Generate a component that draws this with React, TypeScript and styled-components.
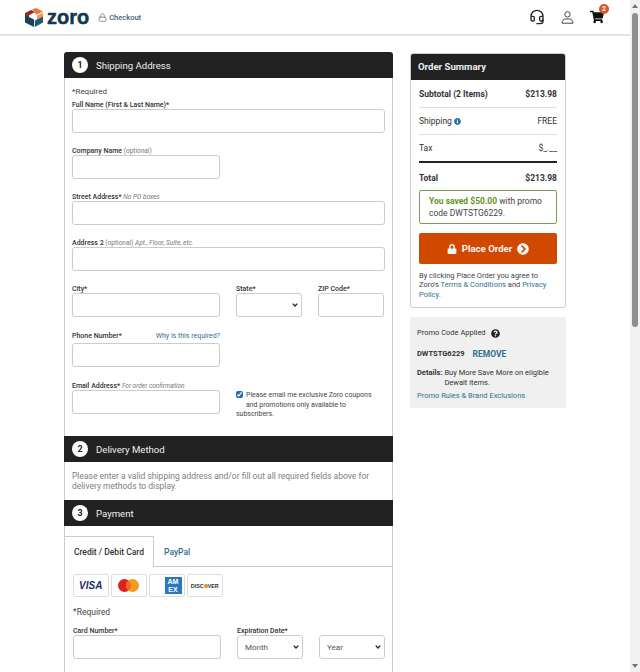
import React from 'react';
import styled, { createGlobalStyle } from 'styled-components';
import { FaChevronCircleRight, FaInfoCircle, FaLock, FaQuestionCircle, FaShoppingCart } from 'react-icons/fa';
import { LuHeadset, LuLock } from 'react-icons/lu';

const GlobalStyle = createGlobalStyle`
  body {
    margin: 0;
    background: #fff;
    color: #333;
    font-family: Roboto, "Liberation Sans", sans-serif;
  }
  * {
    box-sizing: border-box;
  }
`;

const Shell = styled.div`
  width: 630px;
`;

const ScrollTrack = styled.div`
  position: fixed;
  top: 0;
  right: 0;
  bottom: 0;
  width: 10px;
  background: #f1f1f1;
  display: flex;
  flex-direction: column;
  align-items: center;
  padding: 4px 0;
`;

const ScrollArrow = styled.span<{ $down?: boolean }>`
  width: 0;
  height: 0;
  flex: none;
  border-left: 3px solid transparent;
  border-right: 3px solid transparent;
  border-bottom: ${(p) => (p.$down ? 'none' : '4px solid #777')};
  border-top: ${(p) => (p.$down ? '4px solid #777' : 'none')};
  margin-top: ${(p) => (p.$down ? 'auto' : '0')};
`;

const ScrollThumb = styled.span`
  width: 6px;
  height: 314px;
  margin-top: 5px;
  flex: none;
  border-radius: 3px;
  background: #8f8f8f;
`;

const TopBar = styled.header`
  height: 36px;
  border-bottom: 2px solid #e2e2e2;
  display: flex;
  align-items: center;
  padding: 0 26px 0 25px;
`;

const Brand = styled.div`
  display: flex;
  align-items: center;
`;

const Wordmark = styled.span`
  font-family: "Liberation Sans", sans-serif;
  font-size: 20px;
  font-weight: 700;
  line-height: 20px;
  color: #16384f;
  -webkit-text-stroke: 0.5px #16384f;
  margin-left: 4px;
`;

const CheckoutTag = styled.span`
  display: flex;
  align-items: center;
  gap: 2px;
  margin-left: 9px;
  font-size: 7.5px;
  font-weight: 500;
  color: #3b6478;
  svg {
    color: #777;
  }
`;

const TopIcons = styled.div`
  margin-left: auto;
  display: flex;
  align-items: center;
  gap: 16px;
`;

const CartWrap = styled.span`
  position: relative;
  display: flex;
`;

const CartBadge = styled.span`
  position: absolute;
  top: -6px;
  right: -5px;
  width: 10px;
  height: 10px;
  border-radius: 50%;
  background: #d9541e;
  color: #fff;
  font-size: 7px;
  font-weight: 700;
  line-height: 10px;
  text-align: center;
`;

const Page = styled.main`
  width: 502px;
  min-height: 1346px;
  margin: 16px auto 0;
  display: grid;
  grid-template-columns: 329px 156px;
  column-gap: 17px;
`;

const Checkout = styled.div`
  display: flex;
  flex-direction: column;
`;

const SectionBar = styled.div`
  height: 26px;
  flex: none;
  background: #222;
  border-radius: ${(p: { $rounded?: boolean }) => (p.$rounded ? '3px 3px 0 0' : '0')};
  display: flex;
  align-items: center;
  padding-left: 8px;
  gap: 8px;
  color: #eee;
  font-size: 9.6px;
`;

const StepDot = styled.span`
  width: 16px;
  height: 16px;
  border-radius: 50%;
  background: #fff;
  color: #222;
  font-size: 9px;
  font-weight: 700;
  line-height: 16px;
  text-align: center;
`;

const SectionBody = styled.section`
  border: solid #ccc;
  border-width: 0 1px;
  padding: ${(p: { $grow?: boolean }) => (p.$grow ? '10px 0 0' : '8px 7px')};
  flex: ${(p: { $grow?: boolean }) => (p.$grow ? '1' : 'none')};
`;

const Required = styled.div`
  font-size: 8px;
  line-height: 10px;
  color: #444;
  margin: 1px 0 2px;
`;

const Field = styled.div`
  margin-bottom: ${(p: { $after?: number }) => p.$after ?? 12}px;
`;

const Label = styled.label`
  display: flex;
  justify-content: space-between;
  height: 10px;
  padding-top: 1px;
  font-size: 7px;
  font-weight: 500;
  line-height: 10px;
  color: #333;
  margin-bottom: ${(p: { $tall?: boolean }) => (p.$tall ? '3px' : '0')};
`;

const Hint = styled.em`
  font-weight: 400;
  color: #777;
  font-size: 6.5px;
`;

const Optional = styled.span`
  font-weight: 400;
  color: #777;
  font-size: 6.5px;
`;

const LinkText = styled.a`
  color: #31708f;
  font-weight: 400;
`;

const TextInput = styled.input`
  display: block;
  width: 100%;
  height: 24px;
  border: 1px solid #ccc;
  border-radius: 3px;
  background: #fff;
`;

const Picker = styled.select`
  display: block;
  width: 100%;
  height: 24px;
  border: 1px solid #ccc;
  border-radius: 3px;
  appearance: none;
  background: #fff url("data:image/svg+xml,%3Csvg xmlns='http://www.w3.org/2000/svg' width='6' height='4' viewBox='0 0 6 4'%3E%3Cpath d='M.7.6L3 3l2.3-2.4' fill='none' stroke='%23222' stroke-width='1.3'/%3E%3C/svg%3E") no-repeat right 3.5px center;
  padding-left: 7px;
  color: #555;
  font-family: Roboto, sans-serif;
  font-size: 8px;
`;

const ShortColumn = styled.div`
  width: 148px;
`;

const TripleRow = styled.div`
  display: grid;
  grid-template-columns: 148px 66px 66px;
  column-gap: 16px;
`;

const EmailRow = styled.div`
  display: grid;
  grid-template-columns: 148px 1fr;
  column-gap: 16px;
`;

const OptIn = styled.label`
  display: block;
  height: 34px;
  padding-top: 11px;
  font-size: 6.95px;
  line-height: 9.5px;
  color: #444;
  input {
    width: 7px;
    height: 7px;
    margin: 0 3px 0 0;
    accent-color: #1a6fc0;
    vertical-align: -1px;
  }
`;

const Indent = styled.span`
  display: inline-block;
  width: 10px;
`;

const Notice = styled.p`
  margin: 1px 0;
  font-size: 8.5px;
  line-height: 10px;
  color: #808080;
`;

const TabList = styled.div`
  display: flex;
  height: 31px;
  border-bottom: 1px solid #ccc;
`;

const Tab = styled.div<{ $active?: boolean }>`
  width: ${(p) => (p.$active ? '89px' : 'auto')};
  height: ${(p) => (p.$active ? '31px' : '30px')};
  margin-left: ${(p) => (p.$active ? '0' : '10px')};
  background: #fff;
  border-right: ${(p) => (p.$active ? '1px solid #ccc' : 'none')};
  border-top: ${(p) => (p.$active ? '1px solid #ccc' : 'none')};
  font-size: 8.5px;
  font-weight: 500;
  line-height: ${(p) => (p.$active ? '31px' : '32px')};
  text-align: center;
  color: ${(p) => (p.$active ? '#333' : '#31708f')};
`;

const PayPane = styled.div`
  padding: 7px 8px;
`;

const CardRow = styled.div`
  display: flex;
  gap: 2.5px;
  margin-bottom: 10px;
`;

const CardTile = styled.div`
  width: 35.5px;
  height: 23px;
  border: 1px solid #ddd;
  border-radius: 2px;
  background: #fff;
  display: flex;
  align-items: center;
  justify-content: center;
`;

const VisaMark = styled.span`
  font-family: "Liberation Sans", sans-serif;
  font-size: 10px;
  font-weight: 700;
  font-style: italic;
  color: #1f2f6b;
`;

const AmexMark = styled.span`
  width: 17px;
  height: 17px;
  margin-left: auto;
  margin-right: 2px;
  background: #2a78c2;
  color: #fff;
  font-family: "Liberation Sans", sans-serif;
  font-size: 7px;
  font-weight: 700;
  line-height: 8px;
  text-align: center;
  padding-top: 1px;
`;

const DiscoverMark = styled.span`
  font-family: "Liberation Sans", sans-serif;
  font-size: 5.4px;
  font-weight: 700;
  color: #333;
  display: flex;
  align-items: center;
`;

const DiscoverDot = styled.span`
  width: 4px;
  height: 4px;
  border-radius: 50%;
  background: #ec8a1d;
`;

const PayRequired = styled.div`
  font-size: 8.5px;
  line-height: 10px;
  color: #444;
  margin-bottom: 8px;
`;

const Aside = styled.aside`
  align-self: start;
  margin-top: 1px;
  display: flex;
  flex-direction: column;
  gap: 9px;
`;

const SummaryCard = styled.div`
  border: 1px solid #ccc;
  border-radius: 3px;
  overflow: hidden;
`;

const SummaryTitle = styled.h2`
  margin: 0;
  height: 26px;
  background: #222;
  color: #eee;
  font-size: 9.6px;
  font-weight: 700;
  line-height: 26px;
  padding-left: 7px;
`;

const SummaryBody = styled.div`
  padding: 1px 8px 8px;
`;

const SummaryRow = styled.div<{ $strong?: boolean; $line?: 'thin' | 'thick' | 'none' }>`
  height: ${(p) => (p.$line === 'thin' || !p.$line ? '27px' : '28px')};
  padding-top: ${(p) => (p.$line === 'none' ? '1px' : '0')};
  display: flex;
  justify-content: space-between;
  align-items: center;
  font-size: 8.5px;
  font-weight: ${(p) => (p.$strong ? 700 : 400)};
  color: #333;
  border-bottom: ${(p) =>
    p.$line === 'thick' ? '2px solid #222' : p.$line === 'none' ? 'none' : '1px solid #ddd'};
`;

const ShipLabel = styled.span`
  display: flex;
  align-items: center;
  gap: 2px;
  svg {
    color: #2a6f9e;
  }
`;

const SavedBox = styled.div`
  border: 1px solid #7d9a5b;
  border-radius: 2px;
  padding: 4px 9px;
  font-size: 8.5px;
  line-height: 12px;
  color: #444;
  margin-top: -1px;
  b {
    color: #5f9426;
  }
`;

const PlaceOrder = styled.button`
  width: 100%;
  height: 31px;
  margin-top: 9px;
  border: none;
  border-radius: 2px;
  background: #d14900;
  color: #f4f4f4;
  font-family: Roboto, sans-serif;
  font-size: 9.6px;
  font-weight: 700;
  display: flex;
  align-items: center;
  justify-content: center;
  gap: 5px;
`;

const Terms = styled.p`
  margin: 7px 0 0;
  font-size: 7.5px;
  line-height: 9.4px;
  color: #444;
`;

const PromoCard = styled.div`
  background: #f0f0f0;
  padding: 11px 7px 7px;
  font-size: 7.5px;
  color: #333;
`;

const PromoHead = styled.div`
  display: flex;
  align-items: center;
  gap: 5px;
  line-height: 10px;
  svg {
    color: #222;
  }
`;

const PromoCode = styled.div`
  display: flex;
  align-items: center;
  gap: 8px;
  margin-top: 11px;
  line-height: 10px;
  font-weight: 700;
`;

const RemoveLink = styled.a`
  color: #31708f;
  font-size: 8.5px;
`;

const PromoDetails = styled.div`
  display: flex;
  gap: 2px;
  margin-top: 9px;
  line-height: 9.4px;
  b {
    flex: none;
  }
`;

const PromoRules = styled.a`
  display: block;
  margin-top: 4px;
  line-height: 10px;
  color: #31708f;
`;

const Step = ({ n, title, rounded }: { n: number; title: string; rounded?: boolean }) => (
  <SectionBar $rounded={rounded}>
    <StepDot>{n}</StepDot>
    {title}
  </SectionBar>
);

const LogoCube = () => (
  <svg width="18" height="19" viewBox="0 0 18 19">
    <path d="M0 5l6-3 4 2-6 3.2V12L0 10z" fill="#8f2f1e" />
    <path d="M7 1.5L11 0l7 3.5-6.5 3.2z" fill="#e8793a" />
    <path d="M12 7.5L18 4.5v5l-6 3z" fill="#f09a55" />
    <path d="M0 7l9 4.6V19L0 14.5z" fill="#17445c" />
    <path d="M9.8 12.5L18 8.8v5.6L9.8 19z" fill="#1f5a72" />
  </svg>
);

const UserGlyph = () => (
  <svg width="13" height="13" viewBox="0 0 13 13" fill="none" stroke="#333" strokeWidth="0.9">
    <circle cx="6.5" cy="3.4" r="2.7" />
    <path d="M1 12.2c0-2.6 1.6-4 3.2-4.2h4.6c1.6.2 3.2 1.6 3.2 4.2z" />
  </svg>
);

const MasterMark = () => (
  <svg width="21" height="13" viewBox="0 0 21 13">
    <circle cx="6.5" cy="6.5" r="6.5" fill="#e0201c" />
    <circle cx="14.5" cy="6.5" r="6.5" fill="#f39a1f" />
    <path d="M10.5 1.4a6.5 6.5 0 0 1 0 10.2a6.5 6.5 0 0 1 0-10.2z" fill="#f26a1b" />
  </svg>
);

const App: React.FC = () => {
  return (
    <Shell>
      <GlobalStyle />
      <TopBar>
        <Brand>
          <LogoCube />
          <Wordmark>zoro</Wordmark>
          <CheckoutTag>
            <LuLock size={9} />
            Checkout
          </CheckoutTag>
        </Brand>
        <TopIcons>
          <LuHeadset size={16} color="#222" />
          <UserGlyph />
          <CartWrap>
            <FaShoppingCart size={14} color="#111" />
            <CartBadge>2</CartBadge>
          </CartWrap>
        </TopIcons>
      </TopBar>
      <Page>
        <Checkout>
          <Step n={1} title="Shipping Address" rounded />
          <SectionBody>
            <Required>*Required</Required>
            <Field>
              <Label>Full Name (First &amp; Last Name)*</Label>
              <TextInput />
            </Field>
            <Field>
              <ShortColumn>
                <Label>
                  <span>
                    Company Name <Optional>(optional)</Optional>
                  </span>
                </Label>
                <TextInput />
              </ShortColumn>
            </Field>
            <Field>
              <Label>
                <span>
                  Street Address* <Hint>No PO boxes</Hint>
                </span>
              </Label>
              <TextInput />
            </Field>
            <Field>
              <Label>
                <span>
                  Address 2 <Optional>(optional)</Optional> <Hint>Apt., Floor, Suite, etc.</Hint>
                </span>
              </Label>
              <TextInput />
            </Field>
            <Field $after={13}>
              <TripleRow>
                <div>
                  <Label>City*</Label>
                  <TextInput />
                </div>
                <div>
                  <Label>State*</Label>
                  <Picker />
                </div>
                <div>
                  <Label>ZIP Code*</Label>
                  <TextInput />
                </div>
              </TripleRow>
            </Field>
            <Field $after={13}>
              <ShortColumn>
                <Label $tall>
                  Phone Number*
                  <LinkText>Why is this required?</LinkText>
                </Label>
                <TextInput />
              </ShortColumn>
            </Field>
            <Field $after={14}>
              <EmailRow>
                <div>
                  <Label>
                    <span>
                      Email Address* <Hint>For order confirmation</Hint>
                    </span>
                  </Label>
                  <TextInput />
                </div>
                <OptIn>
                  <input type="checkbox" defaultChecked />
                  Please email me exclusive Zoro coupons
                  <br />
                  <Indent />
                  and promotions only available to
                  <br />
                  subscribers.
                </OptIn>
              </EmailRow>
            </Field>
          </SectionBody>
          <Step n={2} title="Delivery Method" />
          <SectionBody>
            <Notice>
              Please enter a valid shipping address and/or fill out all required fields above for
              <br />
              delivery methods to display.
            </Notice>
          </SectionBody>
          <Step n={3} title="Payment" />
          <SectionBody $grow>
            <TabList>
              <Tab $active>Credit / Debit Card</Tab>
              <Tab>PayPal</Tab>
            </TabList>
            <PayPane>
              <CardRow>
                <CardTile>
                  <VisaMark>VISA</VisaMark>
                </CardTile>
                <CardTile>
                  <MasterMark />
                </CardTile>
                <CardTile>
                  <AmexMark>
                    AM
                    <br />
                    EX
                  </AmexMark>
                </CardTile>
                <CardTile>
                  <DiscoverMark>
                    DISC
                    <DiscoverDot />
                    VER
                  </DiscoverMark>
                </CardTile>
              </CardRow>
              <PayRequired>*Required</PayRequired>
              <TripleRow>
                <div>
                  <Label>Card Number*</Label>
                  <TextInput />
                </div>
                <div>
                  <Label>Expiration Date*</Label>
                  <Picker>
                    <option>Month</option>
                  </Picker>
                </div>
                <div>
                  <Label>&nbsp;</Label>
                  <Picker>
                    <option>Year</option>
                  </Picker>
                </div>
              </TripleRow>
            </PayPane>
          </SectionBody>
        </Checkout>
        <Aside>
          <SummaryCard>
            <SummaryTitle>Order Summary</SummaryTitle>
            <SummaryBody>
              <SummaryRow $strong>
                <span>Subtotal (2 Items)</span>
                <span>$213.98</span>
              </SummaryRow>
              <SummaryRow>
                <ShipLabel>
                  Shipping <FaInfoCircle size={7} />
                </ShipLabel>
                <span>FREE</span>
              </SummaryRow>
              <SummaryRow $line="thick">
                <span>Tax</span>
                <span>$_.__</span>
              </SummaryRow>
              <SummaryRow $strong $line="none">
                <span>Total</span>
                <span>$213.98</span>
              </SummaryRow>
              <SavedBox>
                <b>You saved $50.00</b> with promo code DWTSTG6229.
              </SavedBox>
              <PlaceOrder>
                <FaLock size={10} />
                Place Order
                <FaChevronCircleRight size={12} />
              </PlaceOrder>
              <Terms>
                By clicking Place Order you agree to Zoro's <LinkText>Terms &amp; Conditions</LinkText> and{' '}
                <LinkText>Privacy Policy.</LinkText>
              </Terms>
            </SummaryBody>
          </SummaryCard>
          <PromoCard>
            <PromoHead>
              Promo Code Applied <FaQuestionCircle size={9} />
            </PromoHead>
            <PromoCode>
              DWTSTG6229
              <RemoveLink>REMOVE</RemoveLink>
            </PromoCode>
            <PromoDetails>
              <b>Details:</b>
              <span>Buy More Save More on eligible Dewalt items.</span>
            </PromoDetails>
            <PromoRules>Promo Rules &amp; Brand Exclusions</PromoRules>
          </PromoCard>
        </Aside>
      </Page>
      <ScrollTrack>
        <ScrollArrow />
        <ScrollThumb />
        <ScrollArrow $down />
      </ScrollTrack>
    </Shell>
  );
};

export default App;
